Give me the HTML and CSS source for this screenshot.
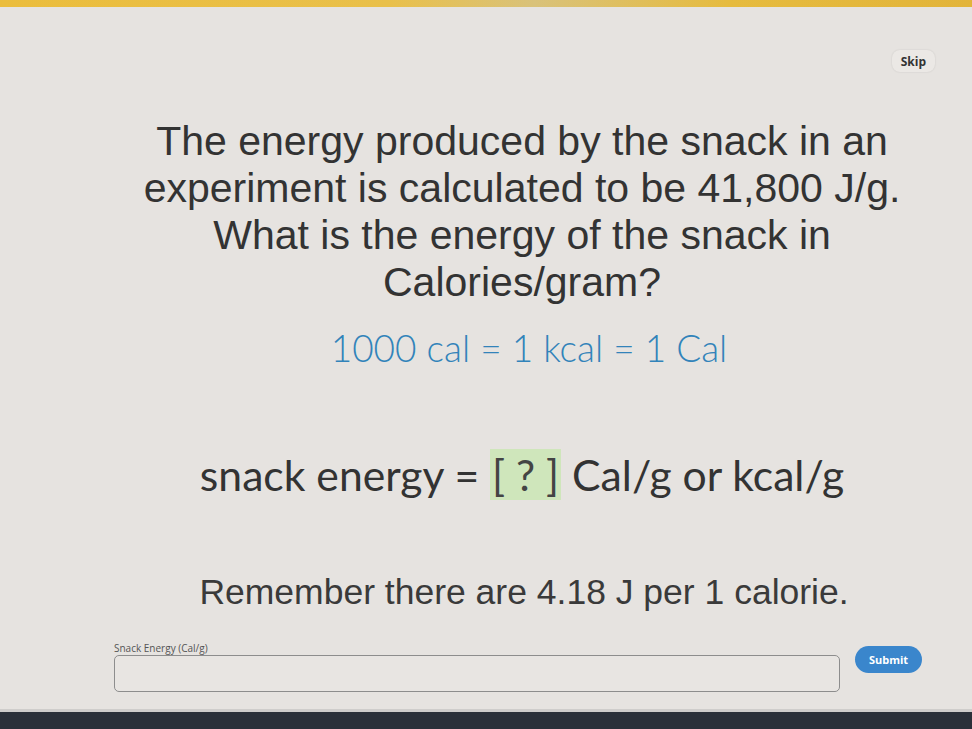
FILE: index.html
```html
<!DOCTYPE html>
<html lang="en">
<head>
    <meta charset="UTF-8">
    <meta name="viewport" content="width=device-width, initial-scale=1.0">
    <title>Snack Energy</title>
    <link rel="stylesheet" href="styles.css">
</head>
<body>
    <div class="topbar"></div>

    <div class="page">
        <div class="skip-row">
            <button class="skip">Skip</button>
        </div>

        <h1 class="question">The energy produced by the snack in an<br>experiment is calculated to be 41,800 J/g.<br>What is the energy of the snack in<br>Calories/gram?</h1>

        <p class="formula">1000 cal = 1 kcal = 1 Cal</p>

        <p class="equation">snack energy = <span class="blank">[ ? ]</span> Cal/g or kcal/g</p>

        <p class="hint">Remember there are 4.18 J per 1 calorie.</p>

        <div class="answer-row">
            <div class="field">
                <label for="answer">Snack Energy (Cal/g)</label>
                <input id="answer" type="text">
            </div>
            <button class="submit">Submit</button>
        </div>
    </div>

    <div class="taskbar"></div>
</body>
</html>
```

FILE: styles.css
```css
body {
    margin: 0;
    padding: 0;
    background-color: #e6e3e0;
    font-family: "Liberation Sans", Arial, sans-serif;
    color: #2f2f2f;
    height: 729px;
    overflow: hidden;
    display: flex;
    flex-direction: column;
}
.topbar {
    height: 7px;
    background: linear-gradient(90deg, #ebbd3c 0%, #e9c04a 40%, #d9c27a 55%, #e6bb3e 75%, #e2b43a 100%);
}
.page {
    flex: 1;
    display: flex;
    flex-direction: column;
    padding: 0 50px 0 114px;
}
.skip-row {
    display: flex;
    justify-content: flex-end;
    padding-top: 43px;
    margin-right: -13px;
}
.skip {
    font-family: "Open Sans", sans-serif;
    font-size: 12px;
    font-weight: 700;
    color: #333;
    background-color: #ebe8e5;
    border: none;
    border-radius: 8px;
    padding: 0 9px;
    height: 22px;
    box-shadow: 0 0 2px rgba(0, 0, 0, 0.12);
}
.question {
    margin: 46px 0 0 8px;
    width: 800px;
    font-weight: normal;
    font-size: 41px;
    line-height: 47px;
    text-align: center;
    color: #333;
}
.formula {
    margin: 20px 0 0 15px;
    width: 800px;
    text-align: center;
    font-family: Lato, sans-serif;
    font-weight: 300;
    font-size: 37px;
    line-height: 44px;
    color: #3283ba;
}
.equation {
    margin: 80px 0 0 8px;
    width: 800px;
    text-align: center;
    font-family: Lato, sans-serif;
    font-size: 42.7px;
    line-height: 50px;
    color: #333;
}
.blank {
    background-color: #cfe6bb;
    color: #444;
    padding: 0 2px;
}
.hint {
    margin: 71px 0 0 10px;
    width: 800px;
    text-align: center;
    font-size: 35.5px;
    line-height: 42px;
    color: #3a3a3a;
}
.answer-row {
    margin-top: 29px;
    display: flex;
    align-items: flex-end;
    gap: 15px;
}
.field {
    flex: 1;
    display: flex;
    flex-direction: column;
}
.field label {
    font-family: "Open Sans", sans-serif;
    font-size: 10px;
    line-height: 12px;
    color: #555;
    margin-bottom: 1px;
}
.field input {
    height: 37px;
    border: 1px solid #8d8d8d;
    border-radius: 5px;
    background-color: #e8e5e2;
    box-sizing: border-box;
}
.submit {
    font-family: "Open Sans", sans-serif;
    font-size: 11px;
    font-weight: 700;
    color: #fff;
    background-color: #3a86cc;
    border: none;
    border-radius: 14px;
    width: 67px;
    height: 27px;
    margin-bottom: 19px;
}
.taskbar {
    height: 17px;
    background-color: #2b3039;
    border-top: 3px solid #cfcdcb;
}
```
